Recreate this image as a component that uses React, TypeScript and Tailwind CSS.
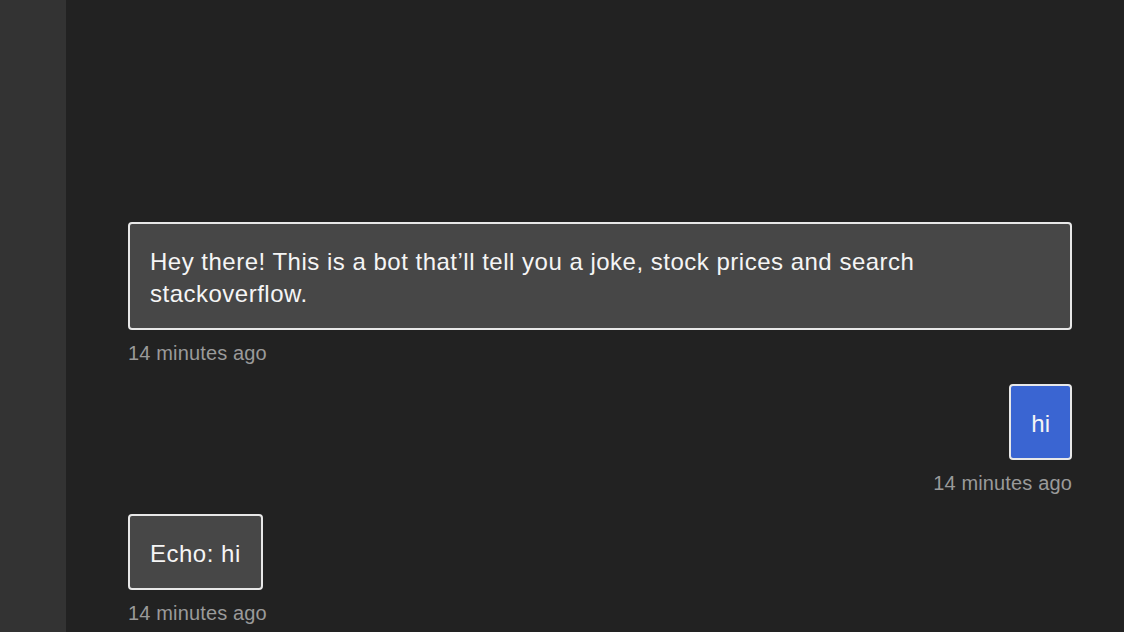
import React from "react";

function Bubble({ text, me }: { text: string; me?: boolean }) {
  return (
    <div className={me ? "flex flex-col items-end" : "flex flex-col items-start"}>
      <div
        className={
          (me ? "bg-[#3a65d2] tracking-[0px] " : "bg-[#474747] tracking-[0.5px] ") +
          "max-w-full border-2 border-[#e8e8e8] rounded-[4px] px-5 pt-[22px] pb-[18px] text-[24px] leading-[32px] text-[#f5f5f5]"
        }
      >
        {text}
      </div>
      <div className="mt-[12px] text-[20px] leading-[22px] tracking-[0.15px] text-[#9a9a9a]">14 minutes ago</div>
    </div>
  );
}

export default function App() {
  return (
    <div
      className="flex h-[632px] w-[1124px] overflow-hidden bg-[#222222]"
      style={{ fontFamily: '"Liberation Sans", Arial, sans-serif' }}
    >
      <div className="w-[66px] shrink-0 bg-[#333333]" />
      <div className="flex min-w-0 flex-1 flex-col justify-end gap-5 pl-[62px] pr-[52px] pb-[8px]">
        <Bubble text="Hey there! This is a bot that’ll tell you a joke, stock prices and search stackoverflow." />
        <Bubble text="hi" me />
        <Bubble text="Echo: hi" />
      </div>
    </div>
  );
}
